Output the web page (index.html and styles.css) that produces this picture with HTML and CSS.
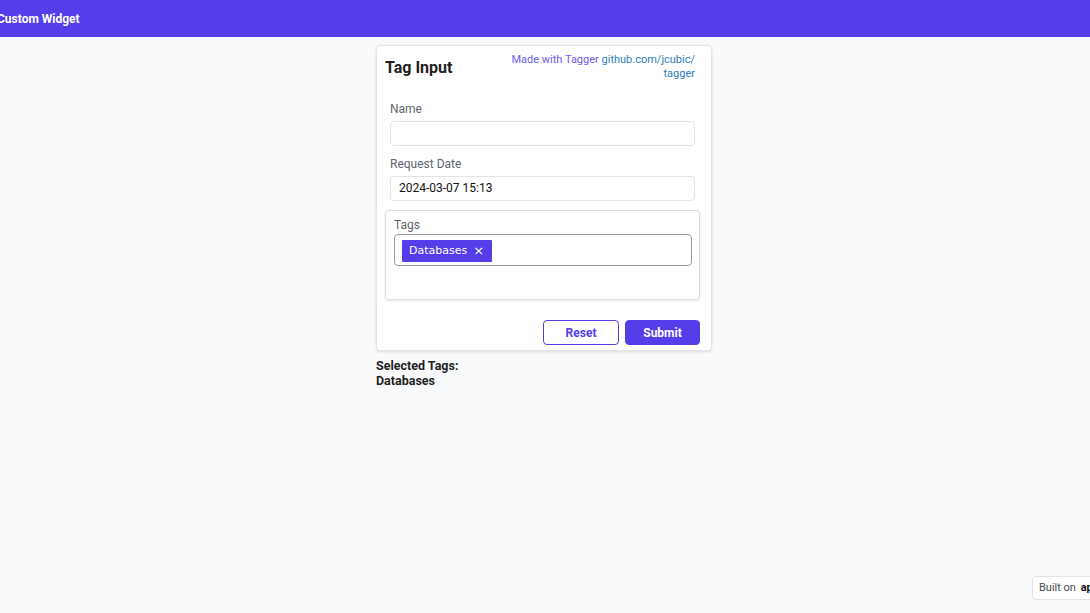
FILE: index.html
```html
<!DOCTYPE html>
<html>
<head>
<meta charset="utf-8">
<link rel="stylesheet" href="styles.css">
</head>
<body>
<header class="topbar"><span class="topbar-title">Custom Widget</span></header>
<main class="main">
  <div class="wrap">
    <section class="card">
      <div class="card-head">
        <h1 class="card-title">Tag Input</h1>
        <div class="credit"><span class="credit-made">Made with Tagger</span> <a class="credit-link">github.com/jcubic/<wbr>tagger</a></div>
      </div>
      <div class="field field-first">
        <label class="field-label">Name</label>
        <div class="input"></div>
      </div>
      <div class="field">
        <label class="field-label">Request Date</label>
        <div class="input">2024-03-07 15:13</div>
      </div>
      <div class="tags-box">
        <div class="tags-label">Tags</div>
        <div class="tag-input">
          <span class="chip">Databases <span class="chip-x">×</span></span>
        </div>
      </div>
      <div class="actions">
        <button class="btn btn-outline">Reset</button>
        <button class="btn btn-solid">Submit</button>
      </div>
    </section>
    <div class="selected">Selected Tags:<br>Databases</div>
  </div>
</main>
<div class="built">Built on <b>appsmith</b></div>
</body>
</html>
```
FILE: styles.css
```css
html, body { margin: 0; padding: 0; overflow: hidden; }
body {
  background: #f8fafc;
  font-family: Roboto, "Liberation Sans", sans-serif;
  color: #1f2937;
  height: 613px;
}
.topbar {
  height: 37px;
  background: #553de9;
  display: flex;
  align-items: center;
}
.topbar-title {
  color: #fff;
  font-weight: 700;
  font-size: 12px;
  margin-left: -3px;
  margin-top: 1px;
}
.main { display: flex; justify-content: center; padding-top: 8px; }
.wrap { width: 336px; margin-left: -2px; }
.card {
  background: #fff;
  border: 1px solid #e2e4e8;
  border-radius: 4px;
  box-shadow: 0 1px 3px rgba(0,0,0,0.12);
  padding: 7px 11px 5px 8px;
}
.card-head {
  display: flex;
  justify-content: space-between;
  align-items: center;
}
.card-title {
  margin: 0;
  font-size: 16px;
  font-weight: 700;
  color: #1f1f1f;
}
.credit {
  width: 205px;
  text-align: right;
  font-size: 11px;
  line-height: 14px;
  margin-right: 5px;
}
.credit-made { color: #6c5cf0; }
.credit-link { color: #2f7db9; text-decoration: none; }
.field { margin: 0 5px 0 5px; }
.field-first { margin-top: 20px; }
.field-label {
  display: block;
  font-size: 12px;
  line-height: 16px;
  color: #5f6570;
  margin-bottom: 4px;
}
.input {
  height: 23px;
  border: 1px solid #e2e4e8;
  border-radius: 4px;
  font-size: 12px;
  line-height: 23px;
  padding: 0 8px;
  color: #111;
  margin-bottom: 10px;
}
.tags-box {
  margin-top: -1px;
  border: 1px solid #dcdde0;
  border-radius: 4px;
  box-shadow: 0 1px 3px rgba(0,0,0,0.1);
  padding: 6px 7px 33px 8px;
}
.tags-label {
  font-size: 12px;
  line-height: 16px;
  color: #5f6570;
  margin-bottom: 1px;
}
.tag-input {
  border: 1px solid #9a9a9a;
  border-radius: 4px;
  padding: 4px 7px;
  box-sizing: border-box;
  height: 32px;
}
.chip {
  display: inline-flex;
  align-items: center;
  height: 22px;
  background: #553de9;
  color: #fff;
  font-family: "DejaVu Sans", Verdana, sans-serif;
  font-size: 11px;
  padding: 0 8px 0 7px;
  border-radius: 1px;
  gap: 6px;
}
.chip-x { font-size: 13px; }
.actions {
  display: flex;
  justify-content: flex-end;
  gap: 6px;
  margin-top: 20px;
}
.btn {
  width: 76px;
  height: 25px;
  border-radius: 4px;
  font-family: Roboto, "Liberation Sans", sans-serif;
  font-size: 12px;
  font-weight: 700;
  cursor: pointer;
}
.btn-outline { background: #fff; color: #553de9; border: 1px solid #553de9; }
.btn-solid { background: #553de9; color: #fff; border: 1px solid #553de9; width: 75px; }
.selected {
  margin-top: 7px;
  font-size: 12.5px;
  font-weight: 700;
  line-height: 15px;
  color: #1f1f1f;
}
.built {
  position: fixed;
  left: 1032px;
  bottom: 13px;
  height: 22px;
  line-height: 22px;
  border: 1px solid #e2e4e8;
  border-radius: 4px;
  background: #fff;
  padding: 0 8px 0 6px;
  font-size: 11px;
  color: #4b4b4b;
  white-space: nowrap;
}
.built b { color: #111; margin-left: 2px; }
```
